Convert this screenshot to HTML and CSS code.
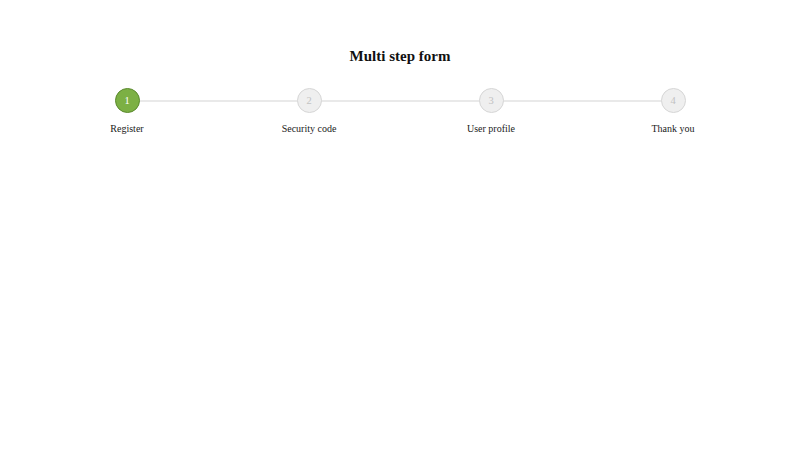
FILE: index.html
```html
<!DOCTYPE html>
<html>
<head>
<meta charset="utf-8">
<link rel="stylesheet" href="styles.css">
</head>
<body>
<h2 class="title">Multi step form</h2>
<div class="steps">
  <div class="step active"><div class="dot">1</div><div class="label">Register</div></div>
  <div class="step"><div class="dot">2</div><div class="label">Security code</div></div>
  <div class="step"><div class="dot">3</div><div class="label">User profile</div></div>
  <div class="step"><div class="dot">4</div><div class="label">Thank you</div></div>
</div>
</body>
</html>
```
FILE: styles.css
```css
html, body { margin: 0; padding: 0; background: #fff; }
body { font-family: "Liberation Serif", "Times New Roman", serif; color: #222; }
.title {
  margin: 0;
  padding-top: 48px;
  font-size: 15px;
  line-height: 17px;
  font-weight: bold;
  text-align: center;
  color: #111;
}
.steps {
  position: relative;
  width: 571px;
  margin: 23px auto 0;
  display: flex;
  justify-content: space-between;
}
.steps::before {
  content: "";
  position: absolute;
  left: 12px;
  right: 12px;
  top: 11.5px;
  height: 2px;
  background: #e9e9e9;
}
.step {
  position: relative;
  width: 25px;
  display: flex;
  flex-direction: column;
  align-items: center;
}
.dot {
  width: 25px;
  height: 25px;
  box-sizing: border-box;
  border-radius: 50%;
  background: #efefef;
  border: 1px solid #d6d6d6;
  color: #c2c2c2;
  font-size: 10.5px;
  display: flex;
  align-items: center;
  justify-content: center;
}
.step.active .dot {
  background: #7cb044;
  border-color: #5b8a2e;
  color: #fff;
}
.label {
  margin-top: 10px;
  font-size: 10px;
  white-space: nowrap;
  color: #1a1a1a;
}
```
